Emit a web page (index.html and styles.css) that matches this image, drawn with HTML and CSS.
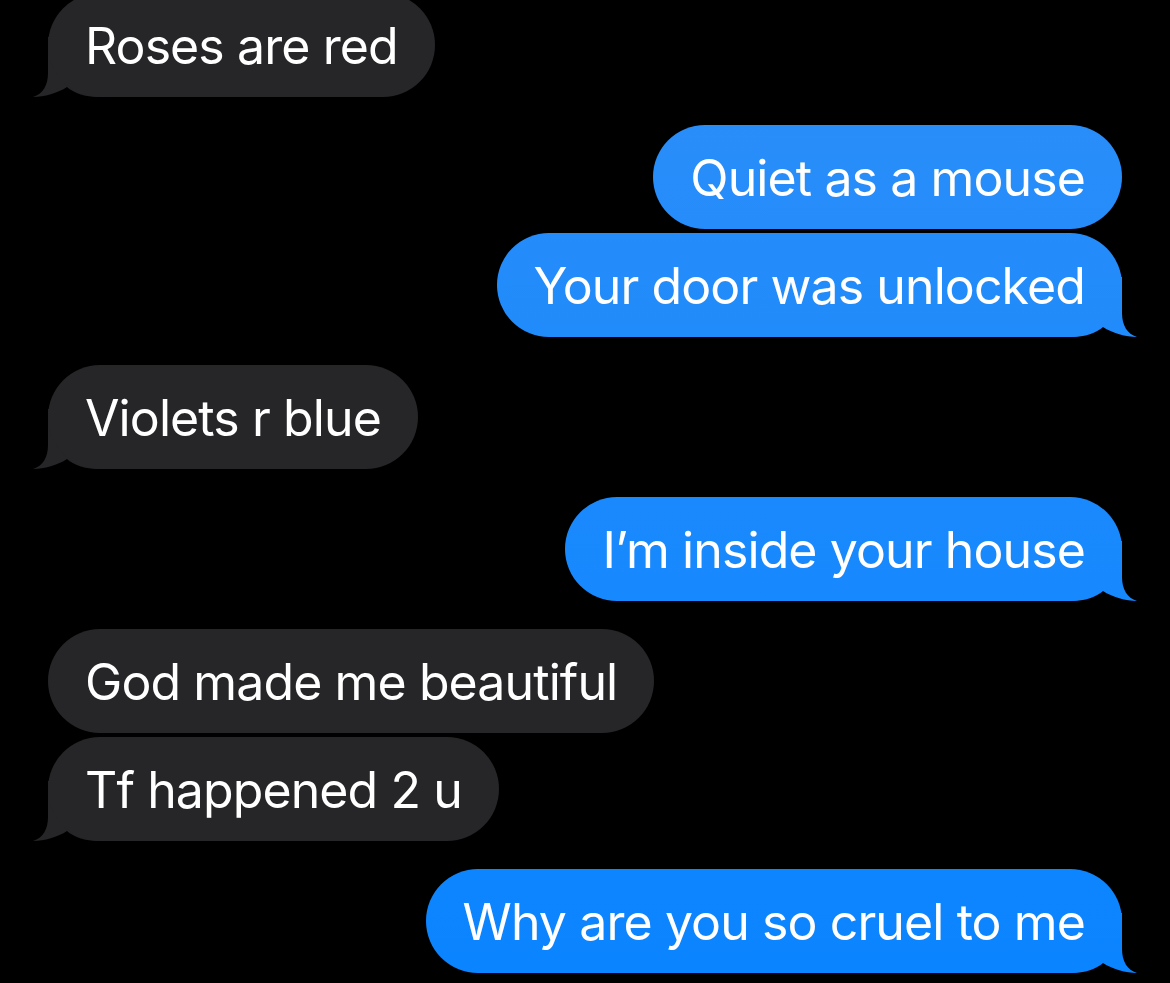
FILE: index.html
```html
<!DOCTYPE html>
<html>
<head>
<meta charset="utf-8">
<link rel="stylesheet" href="styles.css">
</head>
<body>
<div class="chat">
  <div class="group them first">
    <div class="bubble tail">Roses are red</div>
  </div>
  <div class="group me">
    <div class="bubble">Quiet as a mouse</div>
    <div class="bubble tail">Your door was unlocked</div>
  </div>
  <div class="group them">
    <div class="bubble tail">Violets r blue</div>
  </div>
  <div class="group me">
    <div class="bubble tail">I’m inside your house</div>
  </div>
  <div class="group them">
    <div class="bubble">God made me beautiful</div>
    <div class="bubble tail">Tf happened 2 u</div>
  </div>
  <div class="group me">
    <div class="bubble tail">Why are you so cruel to me</div>
  </div>
</div>
</body>
</html>
```
FILE: styles.css
```css
html {
  background: #000;
}
body {
  margin: 0;
  width: 1170px;
  height: 983px;
  overflow: hidden;
  font-family: Inter, "Noto Sans", sans-serif;
}
.chat {
  display: flex;
  flex-direction: column;
  padding: 0 48px;
}
.group {
  display: flex;
  flex-direction: column;
  gap: 4px;
  margin-top: 28px;
}
.group.first {
  margin-top: -7px;
}
.them {
  align-items: flex-start;
}
.me {
  align-items: flex-end;
}
.bubble {
  position: relative;
  box-sizing: border-box;
  height: 104px;
  padding: 2px 37px 0;
  border-radius: 52px;
  display: flex;
  align-items: center;
  white-space: nowrap;
  color: #fff;
  font-size: 50px;
  letter-spacing: -0.9px;
}
.them .bubble,
.them .bubble.tail::after {
  background: #262629;
}
.me .bubble,
.me .bubble.tail::after {
  background: linear-gradient(#2e8ff7 0px, #1a89fd 500px, #0a84ff 983px) fixed;
}
.bubble.tail::after {
  content: "";
  position: absolute;
  z-index: -1;
  bottom: 0;
  width: 70px;
  height: 60px;
}
.them .bubble.tail::after {
  left: -16px;
  clip-path: path("M16,0 L16,36 C16,48 11,57 1,60 C12,60 26,56 35,50 C42,56 52,60 68,60 L70,0 Z");
}
.me .bubble.tail::after {
  right: -16px;
  clip-path: path("M54,0 L54,36 C54,48 59,57 69,60 C58,60 44,56 35,50 C28,56 18,60 2,60 L0,0 Z");
}
```
